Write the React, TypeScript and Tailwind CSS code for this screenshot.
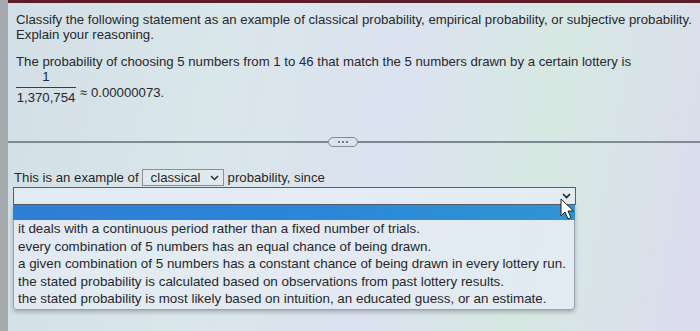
import React from "react";

const options = [
  "it deals with a continuous period rather than a fixed number of trials.",
  "every combination of 5 numbers has an equal chance of being drawn.",
  "a given combination of 5 numbers has a constant chance of being drawn in every lottery run.",
  "the stated probability is calculated based on observations from past lottery results.",
  "the stated probability is most likely based on intuition, an educated guess, or an estimate.",
];

export default function App() {
  return (
    <div
      className="w-[700px] h-[331px] flex overflow-hidden text-[#26282c]"
      style={{ fontFamily: '"Liberation Sans", Arial, sans-serif' }}
    >
      <div className="w-[8px] h-full bg-[#a5aaae] shrink-0" />
      <div className="flex-1 flex flex-col bg-[linear-gradient(100deg,#d3dfe6_0%,#d9e6ea_30%,#dbe2f0_55%,#d6e8e2_75%,#dcdcef_100%)] border-t-[3px] border-[#5b1e28]">
        <div className="pl-[8px] pr-[2px] pt-[9px] text-[13.2px] leading-[15px]">
          <p>Classify the following statement as an example of classical probability, empirical probability, or subjective probability.</p>
          <p>Explain your reasoning.</p>
          <p className="mt-[12px]">The probability of choosing 5 numbers from 1 to 46 that match the 5 numbers drawn by a certain lottery is</p>
          <div className="flex items-center mt-[1px]">
            <div className="flex flex-col items-center">
              <span className="leading-[14px]">1</span>
              <span className="h-[1px] w-[60px] bg-[#3a3c40] my-[3px]" />
              <span className="leading-[14px]">1,370,754</span>
            </div>
            <span className="ml-[4px] mt-[9px]">≈ 0.00000073.</span>
          </div>
        </div>
        <div className="mt-[32px] flex items-center">
          <div className="w-[320px] h-[1.5px] bg-[#7e8b92]" />
          <div className="w-[30px] h-[10px] rounded-full border border-[#7e8b92] flex items-center justify-center gap-[2px]">
            <span className="w-[2px] h-[2px] rounded-full bg-[#4c5a70]" />
            <span className="w-[2px] h-[2px] rounded-full bg-[#4c5a70]" />
            <span className="w-[2px] h-[2px] rounded-full bg-[#4c5a70]" />
          </div>
          <div className="flex-1 h-[1.5px] bg-[#7e8b92]" />
        </div>
        <div className="pl-[5px] mt-[22px] text-[13.2px] leading-[15px]">
          <div className="flex items-center pl-[1px]">
            <span>This is an example of</span>
            <div className="ml-[3px] w-[82px] h-[17px] border border-[#8a9096] bg-[#e4ecf0]/60 flex items-center pl-[8px] pr-[4px]">
              <span className="flex-1">classical</span>
              <svg width="9" height="6" viewBox="0 0 9 6" fill="none">
                <path d="M1 1l3.5 3.5L8 1" stroke="#2a2c30" strokeWidth="1.5" />
              </svg>
            </div>
            <span className="ml-[4px]">probability, since</span>
          </div>
          <div className="relative w-[563px] mt-[1px]">
            <div className="h-[18px] border-[1.5px] border-[#55606c] bg-[#e6edf5]/80 flex items-center justify-end pr-[4px]">
              <svg width="9" height="6" viewBox="0 0 9 6" fill="none">
                <path d="M1 1l3.5 3.5L8 1" stroke="#1e2024" strokeWidth="1.6" />
              </svg>
            </div>
            <div className="absolute left-0 top-[18px] w-[562px] shadow-[0_2px_4px_rgba(0,0,0,0.25)] rounded-b-[4px] overflow-hidden">
              <div className="h-[15px] bg-[linear-gradient(90deg,#2f7ed4,#2a86d8_50%,#3194d2)]" />
              <div className="bg-[#e3eaf3]/90 border-x border-b border-[#9aa3ad] rounded-b-[4px] pl-[4px] pb-[1px] text-[13.4px] leading-[17.5px]">
                {options.map((o) => (
                  <div key={o}>{o}</div>
                ))}
              </div>
            </div>
            <svg className="absolute left-[547px] top-[11px]" width="14" height="22" viewBox="0 0 14 22">
              <path d="M1 1v17l4-4 3 7 3-1.3-3-6.7h5.5z" fill="#ffffff" stroke="#222" strokeWidth="1" />
            </svg>
          </div>
        </div>
      </div>
    </div>
  );
}
